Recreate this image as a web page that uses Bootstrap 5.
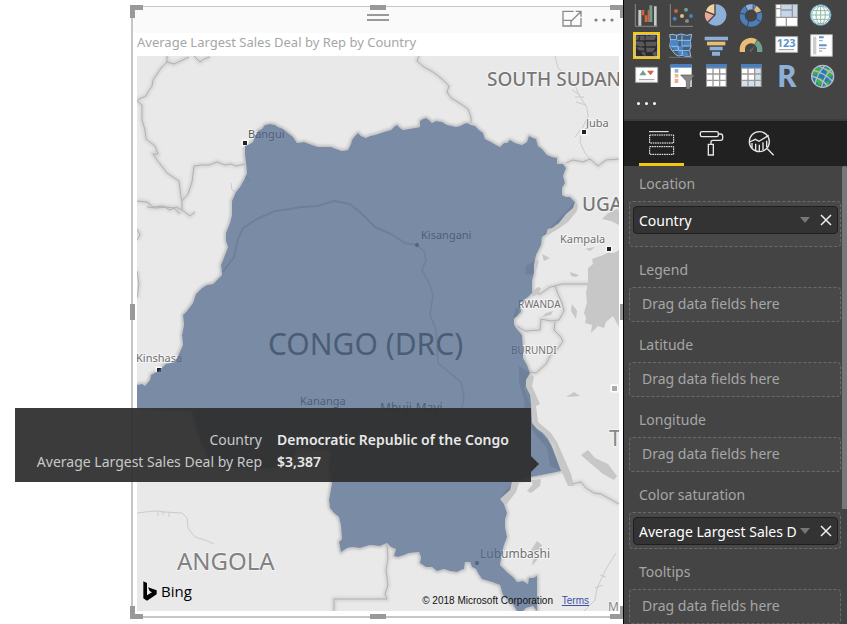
<!DOCTYPE html>
<html lang="en">
<head>
<meta charset="utf-8">
<meta name="viewport" content="width=device-width, initial-scale=1">
<title>Average Largest Sales Deal by Rep by Country</title>
<link rel="stylesheet" href="https://cdn.jsdelivr.net/npm/bootstrap@5.3.0/dist/css/bootstrap.min.css">
<script src="https://cdn.jsdelivr.net/npm/bootstrap@5.3.0/dist/js/bootstrap.bundle.min.js"></script>
<style>
body{font-family:"Noto Sans","Open Sans",sans-serif;font-size:14px;background:#fff}
button{padding:0;border:0;background:none;color:inherit}
svg{display:block}
.report{padding:6px 1px 6px 131px;min-width:0}
.visual{border:solid #c6c6c6;border-width:1px 0 2px 2px}
.visual-head{height:26px;padding-right:3px;background:#fafafa;color:#808080}
.visual-title{height:23px;line-height:19px;padding-left:4px;font-size:13px;color:#a6a6a6}
.map-area{margin:0 3px 5px 4px;min-height:0;background:#e9e9e9}
.handle{position:absolute;background:#999}
.handle-n,.handle-s{width:16px;height:5px;left:50%;margin-left:-8px}
.handle-n{top:-2px}.handle-s{bottom:-3px}
.handle-w,.handle-e{width:5px;height:16px;top:50%;margin-top:-8px}
.handle-w{left:-3px}.handle-e{right:-1px;width:3px}
.corner{position:absolute;width:13px;height:13px;border:0 solid #999}
.corner-nw{left:-3px;top:-2px;border-width:5px 0 0 5px}
.corner-sw{left:-3px;bottom:-3px;border-width:0 0 5px 5px}
.corner-ne{right:-1px;top:-2px;border-width:5px 3px 0 0}
.corner-se{right:-1px;bottom:-3px;border-width:0 3px 5px 0}
.bing{left:6px;bottom:8px;font-size:16px;line-height:24px;color:#000}
.bing span{font-family:"Open Sans",sans-serif;font-size:15px}
.credit{right:30px;bottom:3px;font:10px/14px "Liberation Sans",Arial,sans-serif;color:#111}
.credit a{color:#3a50a8;margin-left:6px}
.data-tip{left:15px;top:408px;width:516px;padding:21px 20px 9px 0;background:rgba(47,47,47,.94);color:#c8c8c8}
.data-tip::after{content:"";position:absolute;left:100%;top:48px;border:8px solid transparent;border-left-color:#333;border-right-width:0}
.data-tip table{font-size:14px;line-height:22px;white-space:nowrap}
.data-tip th{font-weight:400;text-align:right;width:247px;padding:0}
.data-tip td{font-weight:600;color:#e8e8e8;padding:0 0 0 15px}
.side{width:224px;background:#444;border-left:1px solid #000;color:#a6a6a6}
.gallery{padding:2px 0 0 9px;display:grid;grid-template-columns:repeat(6,27px);column-gap:8px;row-gap:3px}
.gallery button{width:27px;height:27px}
.gallery .chosen{background:#fff;outline:2px solid #f2c811;outline-offset:-2px}
.more{height:32px;padding:13px 0 0 13px;border-bottom:2px solid #3c3c3c;gap:5px}
.more i{width:3px;height:3px;border-radius:50%;background:#fff}
.tabs{background:#212121;padding-left:15px;gap:5px}
.tabs button{width:45px;height:45px;border-bottom:3px solid transparent}
.tabs .on{border-bottom-color:#f2c811}
.wells{padding:1px 1px 0 5px;min-width:0}
.thumb{width:5px;height:75%;background:#777;border-radius:2px 2px 0 0}
.well{margin-bottom:6px}
.well h2{font-size:14px;font-weight:400;line-height:34px;margin:0;padding-left:10px}
.drop{border:1px dashed #6a6a6a;border-radius:4px;background:#484848;min-height:35px;line-height:32px;padding-left:12px}
.drop-full{padding:4px 2px 3px 3px}
.drop-tall{min-height:46px}
.pill{height:28px;background:#333;border:1px solid #1f1f1f;border-radius:4px;color:#fff;line-height:27px;padding:0 5px}
.pill span{white-space:nowrap}
.pill .caret{width:16px}
.pill .cut{width:12px}
</style>
</head>
<body>
<div class="d-flex vh-100 overflow-hidden position-relative">
<main class="report flex-grow-1 d-flex">
<section class="visual position-relative flex-grow-1 d-flex flex-column">
  <div class="visual-head position-relative d-flex align-items-center justify-content-end">
    <svg class="position-absolute top-0 start-50 translate-middle-x" width="24" height="20" stroke="#999" stroke-width="2"><path d="M1 8H23M1 13H23"/></svg>
    <button type="button" aria-label="Focus mode" class="me-2"><svg width="24" height="22" viewBox="557 25 72 66" fill="none" stroke="#8a8a8a" stroke-width="4"><path d="M595 32H563V76H617V52M563 59H587V76M588 61L616 33M601 32H617V48"/></svg></button>
    <button type="button" aria-label="More options" class="me-1"><svg width="22" height="22" fill="#808080"><circle cx="3" cy="11" r="1.600"/><circle cx="11" cy="11" r="1.600"/><circle cx="19" cy="11" r="1.600"/></svg></button>
  </div>
  <h1 class="visual-title mb-0 fw-normal">Average Largest Sales Deal by Rep by Country</h1>
  <div class="map-area position-relative flex-grow-1 overflow-hidden">
  <svg class="w-100 h-100" viewBox="137 56 482 555" preserveAspectRatio="xMidYMid slice" role="img" aria-label="Map of Congo (DRC)">
    <defs>
      <filter id="soft" x="-20%" y="-20%" width="140%" height="140%"><feGaussianBlur stdDeviation="1.500"/></filter>
      <path id="congo" d="M245 146L250 144 253 142 255 136 258 131 262 129 265 125 270 124 275 125 278 127 283 129 288 133 293 137 297 143 304 142 312 145 318 147 325 147 331 147 336 149 342 151 348 150 351 144 352 140 355 136 358 133 361 136 366 138 370 136 375 135 384 132 391 130 394 127 397 125 400 128 403 130 409 129 415 128 420 127 420 121 423 119 426 118 429 120 432 123 436 121 442 122 447 125 452 126 456 127 460 126 464 124 467 123 471 125 475 126 479 130 483 133 485 139 491 142 496 145 500 147 504 143 507 143 510 140 515 143 522 145 527 142 529 136 533 138 536 139 538 146 542 149 547 155 552 157 557 158 557 164 563 164 566 168 563 176 565 183 562 188 562 195 566 197 570 197 575 202 573 208 566 214 559 223 552 228 548 229 546 234 542 237 541 245 536 255 534 265 534 273 532 281 532 293 528 297 520 303 521 312 514 319 514 324 516 328 522 335 523 348 523 358 527 365 530 373 526 380 526 387 530 395 531 403 532 423 537 429 543 433 548 439 552 447 557 460 561 471 552 473 531 477 512 482 510 490 500 499 504 504 507 513 505 520 505 527 507 537 504 545 502 553 500 565 508 573 513 577 517 582 523 581 528 584 529 578 533 578 537 576 537 611 533 606 526 608 523 611 517 611 512 603 508 600 503 595 500 585 492 582 482 579 478 573 476 569 472 567 470 562 465 562 464 569 461 570 457 572 450 571 444 569 437 571 432 567 426 567 420 563 421 557 419 552 409 553 404 555 398 557 394 556 396 549 391 547 387 543 380 546 370 545 360 548 352 547 347 548 341 552 339 542 342 539 341 526 339 517 334 513 330 508 329 500 332 483 329 470 331 450 297 447 290 468 220 468 207 455 200 440 192 411 137 408 137 385 142 384 145 386 150 380 151 375 158 371 166 364 175 362 179 354 183 345 182 335 184 325 183 315 187 311 193 303 196 294 202 288 207 285 213 284 219 278 222 275 221 265 225 255 228 247 226 241 226 233 230 223 232 215 232 201 236 192 240 187 244 180 247 173 246 163 245 155Z"/>
      <path id="lines" d="M167 56L167 62 161 68 153 80 152 86 148 92 146 96 139 99 137 101 142 105 142 120 145 130 146 139 155 146 158 154 153 154 157 160 167 173 179 181 181 197 182 201 182 210 190 216 195 212M167 62L174 64 189 57M194 56L200 62 204 59 210 57M182 201L188 194 192 182 194 166 202 165 209 165 217 162 225 165 231 164 236 166 245 164M137 201L147 202 153 207 163 206 170 210 176 207 182 210M147 207L156 208 166 207 174 208 180 214M137 229L140 235 137 240M137 271L139 284 137 298M419 56L417 61 424 67 433 72 442 79 449 86 447 92 451 98 461 104 468 109 471 117 471 123M566 163L573 160 583 162 590 159 598 166 606 160 619 159M532 293L540 294 550 287 555 286 562 284 619 284M555 286L558 294 562 303 564 311 559 320 551 321 541 319 540 330 525 331 517 326M555 322L554 330 560 336 563 341 559 347 551 354 546 364 536 373 529 372M387 544L388 558 386 570 388 585 385 594 387 599H334V611M572 484L581 482 586 488 594 493 601 494 610 499 619 504" fill="none"/>
    </defs>
    <rect x="137" y="56" width="482" height="555" fill="#e9e9e9"/>
    <use href="#lines" stroke="#d4d2d2" stroke-width="4" filter="url(#soft)"/>
    <use href="#lines" stroke="#b5b1b1" stroke-width="1"/>
    <use href="#congo" fill="#e9e9e9" stroke="#b5b5b5" stroke-width="3" filter="url(#soft)"/>
    <use href="#congo" fill="#e9e9e9"/>
    <g fill="#c7c7c7">
      <path d="M619 250L614 253 609 252 603 255 592 259 593 264 588 268 588 283 586 293 587 302 584 313 586 318 585 323 592 325 591 333 598 326 604 328 606 322 613 316 619 327ZM602 219L608 213 619 208V225L611 221Z"/>
      <path d="M575 202L578 205 577 211 568 222 558 229 548 235 543 235 552 226ZM533 262L539 260 537 268 532 275 525 274 526 266ZM542 254L550 258 544 261ZM520 306L516 308 513 317 517 317ZM529 372L526 388 531 402 534 423 545 434 554 445 561 470 568 486 574 486 571 474 557 442 551 433 538 422 536 406 540 404 532 386 534 377Z"/>
      <path d="M519 366V383L524 399 525 420 538 438 547 448 550 466 561 471 552 445 532 423 530 402 524 388 530 373ZM517 478L512 484 505 491 500 499 506 505 516 492 520 480ZM530 480L541 479 540 486 531 493 527 491 533 484ZM581 455L588 450 595 458 608 464 617 476 614 480 603 474 590 463ZM537 541L542 545 540 551 537 560 532 566 534 554 531 550ZM585 249L595 247 590 251ZM570 272L579 275 576 277 571 276ZM532 297L539 293 541 288 538 287 534 290ZM542 317L546 313 553 311 551 315ZM572 304L577 311 576 319 571 311ZM566 397L574 392 580 396Z"/>
    </g>
    <path d="M555 56L558 68 569 77 575 85 578 93 587 108 588 116 582 129 580 142 585 153 590 159M575 137L581 129M572 90L580 95M575 97L584 97M576 102L586 105M231 183L232 190 235 192 235 196M246 176L250 182M616 553L606 569 597 588 595 600 584 611M606 577L600 575M603 585L595 588M158 512V516M163 511V515M169 513V517M137 513L145 512 155 511 165 512 182 513 187 518 188 528 195 537 205 540 214 544" fill="none" stroke="#cbcbcb"/>
    <path d="M223 272L234 257 238 239 243 228 257 219 275 211 290 209 301 207 318 206 334 201 350 204 361 213 375 227 391 234 405 243 416 245" fill="none" stroke="#c2c2c2" stroke-width="2" stroke-linejoin="round"/>
    <path d="M416 245L424 251 426 260 422 270 429 283 433 295 430 315 436 330 438 363 451 374 461 382 464 397 462 408" fill="none" stroke="#c6c6c6" stroke-width="1.500"/>
    <g font-size="11" fill="#6f6f6f" stroke="#f4f4f4" stroke-width="2" paint-order="stroke" stroke-linejoin="round">
      <text x="248" y="138" fill="#555">Bangui</text>
      <text x="586" y="127">Juba</text><text x="560" y="243">Kampala</text>
      <text x="136" y="362">Kinshasa</text><text x="480" y="558" font-size="12">Lubumbashi</text>
      <text x="518" y="308" font-size="10">RWANDA</text><text x="511" y="354" font-size="10">BURUNDI</text>
      <text x="487" y="86" font-size="19" fill="#777" font-weight="500">SOUTH SUDAN</text>
      <text x="582" y="211" font-size="19" fill="#777" font-weight="500">UGA</text>
      <text x="609" y="446" font-size="22" fill="#888">T</text>
      <text x="177" y="570" font-size="24" fill="#828282">ANGOLA</text>
      <text x="608" y="611" font-size="12" fill="#888">M</text>
    </g>
    <g fill="#555"><text x="421" y="239" font-size="11">Kisangani</text><text x="300" y="405" font-size="11">Kananga</text><text x="380" y="412" font-size="12">Mbuji-Mayi</text><text x="268" y="355" font-size="30" fill="#4e4e4e">CONGO (DRC)</text></g>
    <path d="M243 141h4v4h-4zM582 130h4v4h-4zM607 247h4v4h-4zM157 368h4v4h-4z" fill="#222" stroke="#f8f8f8" stroke-width="3" paint-order="stroke"/>
    <path d="M612 386h5v5h-5z" fill="#aaa" stroke="#fff" stroke-width="3" paint-order="stroke"/>
    <circle cx="417" cy="245" r="2" fill="#666"/><circle cx="477" cy="563" r="2" fill="#666"/>
    <use href="#congo" fill="#4a6488" fill-opacity=".7"/>
  </svg>
  <div class="bing position-absolute d-flex align-items-center gap-1"><svg width="14" height="20" viewBox="428 543 42 60"><path d="M429 544L440 549V586L455 577 448 573 443 562 469 571V583L440 602 429 595Z"/></svg><span>Bing</span></div>
  <div class="credit position-absolute text-nowrap">© 2018 Microsoft Corporation <a href="#">Terms</a></div>
  </div>
  <i class="corner corner-nw"></i><i class="corner corner-ne"></i><i class="corner corner-sw"></i><i class="corner corner-se"></i>
  <i class="handle handle-n"></i><i class="handle handle-s"></i><i class="handle handle-w"></i><i class="handle handle-e"></i>
</section>
</main>
<div class="data-tip position-absolute" role="tooltip">
  <table><tbody>
    <tr><th scope="row">Country</th><td>Democratic Republic of the Congo</td></tr>
    <tr><th scope="row">Average Largest Sales Deal by Rep</th><td>$3,387</td></tr>
  </tbody></table>
</div>
<aside class="side flex-shrink-0 d-flex flex-column">
  <div class="gallery">
    <button type="button" aria-label="Waterfall chart"><svg viewBox="27 6 81 81"><path d="M34 12V79H100" fill="none" stroke="#888" stroke-width="3"/><path d="M43 30h9v47h-9zM90 19h8v58h-8z" fill="#c8c8c8"/><path d="M53 30h8v16h-8zM62 46h8v20h-8zM71 30h5v36h-5z" fill="#d6603f"/><path d="M76 16h9v50h-9z" fill="#6ea08d"/></svg></button>
    <button type="button" aria-label="Scatter chart"><svg viewBox="132 6 81 81"><path d="M139 12V79H207" fill="none" stroke="#888" stroke-width="3"/><g fill="#4a7fbe"><circle cx="152" cy="56" r="6"/><circle cx="201" cy="48" r="6"/></g><circle cx="156" cy="33" r="6" fill="#d6603f"/><circle cx="186" cy="29" r="6" fill="#6ea08d"/><circle cx="174" cy="48" r="6" fill="#e9bd75"/><circle cx="189" cy="63" r="6" fill="#888"/></svg></button>
    <button type="button" aria-label="Pie chart"><svg viewBox="237 6 81 81"><path d="M275 13A32 32 0 1 1 253 68L275 45Z" fill="#8db0d9"/><path d="M271 12V42L246 32A31 31 0 0 1 271 12Z" fill="#f0d3a3"/><path d="M244 36L269 46 250 65A31 31 0 0 1 244 36Z" fill="#eca897"/></svg></button>
    <button type="button" aria-label="Donut chart"><svg viewBox="342 6 81 81" fill="none" stroke-width="15"><circle cx="381" cy="47" r="26" stroke="#4a7fbe"/><path d="M366 26A26 26 0 0 1 390 22" stroke="#8db0d9"/><path d="M394 24A26 26 0 0 1 404 36" stroke="#e9bd75"/><path d="M363 18L371 32M388 14L387 30M397 40L414 35M397 57L410 66M374 63L370 80M348 40L365 43" stroke="#444" stroke-width="3"/></svg></button>
    <button type="button" aria-label="Treemap"><svg viewBox="447 6 81 81"><path d="M454 12h68v68h-68z" fill="#999"/><path d="M457 15h12v9h-12zM457 28h12v22h-12zM457 54h28v23h-28zM489 54h30v23h-30z" fill="#fff"/><path d="M472 15h31v13h-31zM472 32h31v18h-31zM507 15h12v35h-12z" fill="#c3d6ec"/></svg></button>
    <button type="button" aria-label="Map"><svg viewBox="552 6 81 81"><circle cx="590" cy="45" r="31" fill="#fff" stroke="#5b95cc" stroke-width="3"/><g fill="none" stroke="#8bb7a4" stroke-width="3"><circle cx="590" cy="45" r="27"/><ellipse cx="590" cy="45" rx="14" ry="27"/><path d="M590 18V72M563 45H617M567 32H613M567 58H613"/></g></svg></button>

    <button type="button" class="chosen" aria-label="Filled map" aria-pressed="true"><svg viewBox="27 96 81 81"><path d="M35 104h65v65H35z" fill="#2b2b2b"/><path d="M37 106L45 108 43 119 36 120ZM47 107H62V121H48ZM66 105L76 108 86 104 97 108 92 120H64ZM36 124L58 125 63 137 50 140 36 135ZM65 125H98L96 138 66 139ZM36 141L60 143 62 152 44 151ZM66 143H94L87 155 68 157ZM51 155L63 157 66 168 57 165ZM84 160L98 152V168H91Z" fill="#595959"/></svg></button>
    <button type="button" aria-label="Shape map"><svg viewBox="132 96 81 81"><path d="M137 104L147 103 157 106 171 102 188 106 203 103 199 125 201 139 197 151 200 169H185L175 166 164 168 155 164 146 154 137 140 140 122Z" fill="#41617f" stroke="#9ac0e5" stroke-width="3"/><path d="M139 122L151 119 164 123 163 138 177 138 180 122H199L198 137 177 140 176 155 190 157 195 167H180L163 163 161 150 145 145 139 136Z" fill="#4a86c6"/><path d="M158 104V119H138M160 121H201M174 106V138H200M140 139H163V151H146M165 152H196M175 153V166" fill="none" stroke="#9ac0e5" stroke-width="3"/><path d="M135 172H205" stroke="#888" stroke-width="2"/></svg></button>
    <button type="button" aria-label="Funnel"><svg viewBox="237 96 81 81"><path d="M242 110h70v11h-70zM257 140h39v11h-39zM264 155h24v12h-24z" fill="#8db0d9"/><path d="M249 125h55v11h-55z" fill="#e9bd75"/></svg></button>
    <button type="button" aria-label="Gauge"><svg viewBox="342 96 81 81" fill="none" stroke-width="16"><path d="M355 156V148A26 26 0 0 1 395 126" stroke="#e9bd75"/><path d="M396 127A26 26 0 0 1 407 148V156" stroke="#6ea08d"/><path d="M375 153L393 137 382 155Z" fill="#666"/></svg></button>
    <button type="button" aria-label="Card"><svg viewBox="447 96 81 81"><path d="M455 110h66v47h-66z" fill="#fff" stroke="#aaa" stroke-width="3"/><text x="458" y="140" font-size="33" font-weight="700" fill="#5b95cc">123</text><path d="M464 149H510" stroke="#999" stroke-width="3"/></svg></button>
    <button type="button" aria-label="Multi-row card"><svg viewBox="552 96 81 81"><path d="M560 104h65v65h-65z" fill="#fff" stroke="#aaa" stroke-width="3"/><path d="M567 110h10v53h-10z" fill="#ccc"/><path d="M585 109h14v6h-14zM585 133h23v6h-23z" fill="#5b95cc"/><path d="M585 122h11M585 145h21M585 153h10" stroke="#999" stroke-width="3"/></svg></button>

    <button type="button" aria-label="KPI"><svg viewBox="27 186 81 81"><path d="M35 202h66v45H35z" fill="#fff" stroke="#aaa" stroke-width="3"/><path d="M46 226L57 211 68 226Z" fill="#6ea08d"/><path d="M69 212H90L80 226Z" fill="#d6603f"/><path d="M45 239H91" stroke="#999" stroke-width="3"/></svg></button>
    <button type="button" aria-label="Slicer"><svg viewBox="132 186 81 81"><path d="M140 194h63v67h-63z" fill="#fff"/><path d="M140 192h63v11h-63z" fill="#4a7fbe"/><path d="M152 207h11v11h-11z" fill="#8db0d9"/><path d="M152 222h11v11h-11z" fill="#e9bd75"/><path d="M152 237h11v12h-11z" fill="#eca897"/><path d="M170 225H211L198 243V267H187V243Z" fill="#888" stroke="#555" stroke-width="2"/></svg></button>
    <button type="button" aria-label="Table"><svg viewBox="237 186 81 81"><path d="M246 193h62v68h-62z" fill="#999"/><path d="M246 192h62v11h-62z" fill="#4a7fbe"/><g fill="#fff"><path d="M249 206h16v14h-16zM269 206h16v14h-16zM289 206h16v14h-16zM249 224h16v15h-16zM269 224h16v15h-16zM289 224h16v15h-16zM249 243h16v15h-16zM269 243h16v15h-16zM289 243h16v15h-16z"/></g></svg></button>
    <button type="button" aria-label="Matrix"><svg viewBox="342 186 81 81"><path d="M351 193h62v68h-62z" fill="#999"/><path d="M351 192h62v11h-62z" fill="#4a7fbe"/><path d="M354 206h16v14h-16zM374 206h16v14h-16zM354 224h16v15h-16zM374 224h16v15h-16z" fill="#fff"/><path d="M394 206h16v14h-16zM394 224h16v15h-16zM354 243h16v15h-16zM374 243h16v15h-16zM394 243h16v15h-16z" fill="#d3e0ee"/></svg></button>
    <button type="button" aria-label="R script visual"><svg viewBox="447 186 81 81"><text x="459" y="260" font-size="90" font-weight="700" fill="#8db0d9">R</text></svg></button>
    <button type="button" aria-label="ArcGIS map"><svg viewBox="552 186 81 81"><circle cx="596" cy="229" r="34" fill="#267aba"/><path d="M566 215L581 202 592 208 583 223 570 226ZM603 201L622 211 626 229 609 230ZM574 241L592 233 599 244 586 258ZM606 247L620 239 609 260 599 259Z" fill="#37b34a"/><g fill="none" stroke="#bbb" stroke-width="4"><circle cx="596" cy="229" r="33"/><path d="M568 211Q600 218 625 243M583 199Q610 208 627 223M563 228Q590 235 611 257M602 197Q580 220 573 252M620 209Q600 230 592 262"/></g></svg></button>
  </div>
  <button type="button" class="more d-flex" aria-label="Import custom visual"><i></i><i></i><i></i></button>
  <div class="tabs d-flex">
    <button type="button" class="on" aria-label="Fields"><svg viewBox="45 9 135 126" fill="none" stroke="#fff" stroke-width="3"><path d="M75 41H134"/><path d="M77 51H149V75H77ZM77 86H149V109H77Z" stroke-dasharray="5 2"/></svg></button>
    <button type="button" aria-label="Format"><svg viewBox="195 9 135 126" fill="none" stroke="#e6e6e6" stroke-width="4"><rect x="229" y="41" width="54" height="15" rx="5"/><path d="M283 48H290Q296 48 296 55V61Q296 67 290 67H267Q261 67 261 72V78M253 79H268V111H253Z"/></svg></button>
    <button type="button" aria-label="Analytics"><svg viewBox="345 9 135 126" fill="none" stroke="#e6e6e6" stroke-width="4"><circle cx="406" cy="71" r="30"/><path d="M377 72L394 64 405 70 434 52M384 75V90M395 77V98M406 80V100M417 73V97M428 68V87M430 92L449 112"/></svg></button>
  </div>
  <div class="d-flex flex-grow-1 overflow-hidden">
    <div class="wells flex-grow-1">
      <div class="well"><h2>Location</h2><div class="drop drop-full drop-tall"><div class="pill d-flex"><span class="flex-grow-1">Country</span><button type="button" class="caret" aria-label="Country options"><svg width="10" height="6" fill="#777"><path d="M0 0H10L5 6Z"/></svg></button><button type="button" class="cut ms-1" aria-label="Remove Country"><svg width="12" height="12" stroke="#eee" stroke-width="1.500"><path d="M1 1L11 11M11 1L1 11"/></svg></button></div></div></div>
      <div class="well"><h2>Legend</h2><div class="drop">Drag data fields here</div></div>
      <div class="well"><h2>Latitude</h2><div class="drop">Drag data fields here</div></div>
      <div class="well"><h2>Longitude</h2><div class="drop">Drag data fields here</div></div>
      <div class="well"><h2>Color saturation</h2><div class="drop drop-full"><div class="pill d-flex"><span class="flex-grow-1">Average Largest Sales D</span><button type="button" class="caret" aria-label="Average options"><svg width="10" height="6" fill="#777"><path d="M0 0H10L5 6Z"/></svg></button><button type="button" class="cut ms-1" aria-label="Remove Average"><svg width="12" height="12" stroke="#eee" stroke-width="1.500"><path d="M1 1L11 11M11 1L1 11"/></svg></button></div></div></div>
      <div class="well"><h2>Tooltips</h2><div class="drop">Drag data fields here</div></div>
    </div>
    <div class="thumb flex-shrink-0"></div>
  </div>
</aside>
</div>
</body>
</html>
